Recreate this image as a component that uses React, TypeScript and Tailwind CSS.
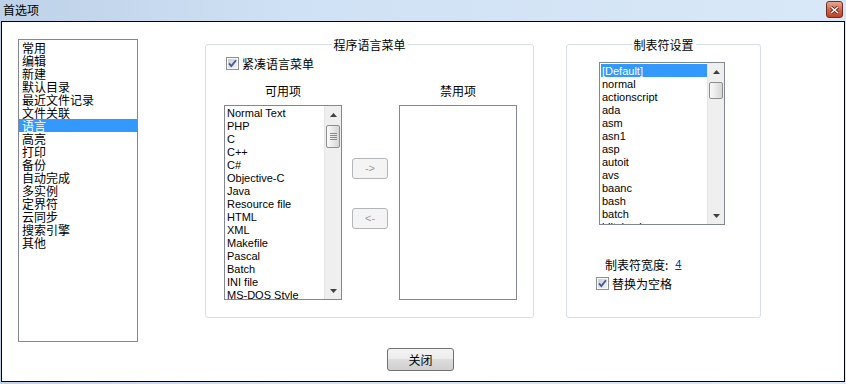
// 首选项 对话框 (语言 页)

const categories = [
    "常用", "编辑", "新建", "默认目录", "最近文件记录", "文件关联", "语言", "高亮",
    "打印", "备份", "自动完成", "多实例", "定界符", "云同步", "搜索引擎", "其他",
];

const languages = [
    "Normal Text", "PHP", "C", "C++", "C#", "Objective-C", "Java", "Resource file",
    "HTML", "XML", "Makefile", "Pascal", "Batch", "INI file", "MS-DOS Style",
];

const tabLangs = [
    "[Default]", "normal", "actionscript", "ada", "asm", "asn1", "asp", "autoit",
    "avs", "baanc", "bash", "batch", "blitzbasic",
];

// 스크롤 화살표
function Arrow({ down }: { down?: boolean }) {
    return (
        <div className="flex h-[17px] shrink-0 items-center justify-center">
            <svg width="7" height="4" viewBox="0 0 7 4">
                <path d={down ? "M0 0H7L3.5 4Z" : "M3.5 0L7 4H0Z"} fill="#404040" />
            </svg>
        </div>
    );
}

// 세로 스크롤바
function ScrollBar({ thumb, grip }: { thumb: string; grip?: boolean }) {
    return (
        <div className="flex w-[17px] shrink-0 flex-col border-l border-[#e6e6e6] bg-[#efefef]">
            <Arrow />
            <div
                className={
                    "mx-[1px] flex flex-col items-center justify-center gap-[1px] rounded-[2px] border border-[#8f8f8f] bg-gradient-to-r from-[#fbfbfb] to-[#d6d6d6] " +
                    thumb
                }
            >
                {grip &&
                    [0, 1, 2, 3].map((i) => (
                        <div key={i} className="h-[1px] w-[7px] bg-[#8c8c8c]" />
                    ))}
            </div>
            <div className="flex-1" />
            <Arrow down />
        </div>
    );
}

// 체크박스
function CheckBox() {
    return (
        <svg width="13" height="13" viewBox="0 0 13 13" className="shrink-0">
            <defs>
                <linearGradient id="cbg" x1="0" y1="0" x2="1" y2="1">
                    <stop offset="0" stopColor="#c9ced6" />
                    <stop offset="1" stopColor="#f2f3f5" />
                </linearGradient>
            </defs>
            <rect x="0.5" y="0.5" width="12" height="12" fill="#fafafa" stroke="#8e8f8f" />
            <rect x="2" y="2" width="9" height="9" fill="url(#cbg)" />
            <path d="M3 6.3L5.3 9L10 3.2" stroke="#3f5a99" strokeWidth="1.8" fill="none" />
        </svg>
    );
}

// 비활성 버튼
function DisabledButton({ label }: { label: string }) {
    return (
        <div className="flex h-[21px] w-[36px] items-center justify-center rounded-[3px] border border-[#b3b6b8] bg-[#f4f4f4] font-['Liberation_Sans',sans-serif] text-[11px] text-[#9a9a9a]">
            {label}
        </div>
    );
}

export default function App() {
    return (
        <div className="flex h-[384px] w-[846px] flex-col bg-[linear-gradient(90deg,#bdd1e8_0%,#cfe1f4_35%,#d9e8f8_100%)] font-['Noto_Sans_CJK_SC',sans-serif] text-[12px] text-black">
            {/* 타이틀바 */}
            <div className="flex h-[21px] shrink-0 items-start justify-between">
                <span className="ml-[3px] mt-[2px] leading-[15px]">首选项</span>
                <div className="mr-[3px] mt-[1px] flex h-[17px] w-[17px] items-center justify-center rounded-[3px] border border-[#6e2d22] bg-[linear-gradient(180deg,#eba58e_0%,#d5694c_50%,#c1401f_100%)]">
                    <svg width="9" height="8" viewBox="0 0 9 8">
                        <path d="M1 1L8 7M8 1L1 7" stroke="#5a2318" strokeWidth="3" />
                        <path d="M1 1L8 7M8 1L1 7" stroke="#ffffff" strokeWidth="1.6" />
                    </svg>
                </div>
            </div>

            {/* 본문 */}
            <div className="mx-[1px] h-[361px] border border-black bg-white">
                <div className="flex items-start pl-[16px] pt-[17px]">
                    {/* 카테고리 목록 */}
                    <div className="h-[303px] w-[120px] shrink-0 border border-[#828790] py-[1px]">
                        {categories.map((c) => (
                            <div
                                key={c}
                                className={
                                    c === "语言"
                                        ? "h-[13px] bg-[#3399ff] pl-[3px] leading-[13px] text-white"
                                        : "h-[13px] pl-[3px] leading-[13px]"
                                }
                            >
                                {c}
                            </div>
                        ))}
                    </div>

                    {/* 程序语言菜单 */}
                    <div className="relative ml-[67px] mt-[5px] h-[274px] w-[329px] shrink-0 rounded-[3px] border border-[#d5dfe5]">
                        <span className="absolute left-1/2 top-[-8px] -translate-x-1/2 bg-white px-[2px] leading-[15px]">
                            程序语言菜单
                        </span>
                        <div className="flex items-center gap-[3px] pl-[20px] pt-[12px] leading-[13px]">
                            <CheckBox />
                            <span>紧凑语言菜单</span>
                        </div>
                        <div className="mt-[14px] flex pl-[18px]">
                            <div className="w-[118px]">
                                <div className="h-[21px] text-center leading-[13px]">可用项</div>
                                <div className="flex h-[195px] overflow-hidden border border-[#828790]">
                                    <div className="flex-1 overflow-hidden pt-[1px] font-['Liberation_Sans',sans-serif] text-[11px]">
                                        {languages.map((l) => (
                                            <div key={l} className="h-[13px] whitespace-nowrap pl-[2px] leading-[13px]">
                                                {l}
                                            </div>
                                        ))}
                                    </div>
                                    <ScrollBar thumb="mt-[2px] h-[23px]" grip />
                                </div>
                            </div>
                            <div className="ml-[10px] flex flex-col pt-[74px]">
                                <DisabledButton label="->" />
                                <div className="mt-[29px]">
                                    <DisabledButton label="<-" />
                                </div>
                            </div>
                            <div className="ml-[11px] w-[118px]">
                                <div className="h-[21px] text-center leading-[13px]">禁用项</div>
                                <div className="h-[195px] border border-[#828790]" />
                            </div>
                        </div>
                    </div>

                    {/* 制表符设置 */}
                    <div className="relative ml-[32px] mt-[5px] h-[274px] w-[195px] shrink-0 rounded-[3px] border border-[#d5dfe5]">
                        <span className="absolute left-1/2 top-[-8px] -translate-x-1/2 bg-white px-[2px] leading-[15px]">
                            制表符设置
                        </span>
                        <div className="pl-[29px] pt-[17px]">
                            <div className="ml-[3px] flex h-[163px] w-[126px] overflow-hidden border border-[#828790]">
                                <div className="flex-1 overflow-hidden pl-[1px] pt-[1px] font-['Liberation_Sans',sans-serif] text-[11px]">
                                    {tabLangs.map((t) => (
                                        <div
                                            key={t}
                                            className={
                                                t === "[Default]"
                                                    ? "h-[13px] bg-[#3399ff] pl-[1px] pt-[1px] leading-[12px] text-white"
                                                    : "h-[13px] pl-[1px] pt-[1px] leading-[13px]"
                                            }
                                        >
                                            {t}
                                        </div>
                                    ))}
                                </div>
                                <ScrollBar thumb="mt-[2px] h-[17px]" />
                            </div>
                            <div className="ml-[9px] mt-[33px] flex items-start leading-[13px]">
                                <span>制表符宽度:</span>
                                <span className="ml-[7px] font-['Liberation_Sans',sans-serif] text-[11px] text-[#0033cc] underline">4</span>
                            </div>
                            <div className="mt-[6px] flex items-center gap-[3px] leading-[13px]">
                                <CheckBox />
                                <span>替换为空格</span>
                            </div>
                        </div>
                    </div>
                </div>

                {/* 닫기 버튼 */}
                <div className="pl-[385px] pt-[6px]">
                    <div className="flex h-[23px] w-[67px] items-center justify-center rounded-[3px] border border-[#707070] bg-[linear-gradient(180deg,#f4f4f4_0%,#ebebeb_50%,#dddddd_50%,#cfcfcf_100%)] leading-[13px]">
                        关闭
                    </div>
                </div>
            </div>
        </div>
    );
}
